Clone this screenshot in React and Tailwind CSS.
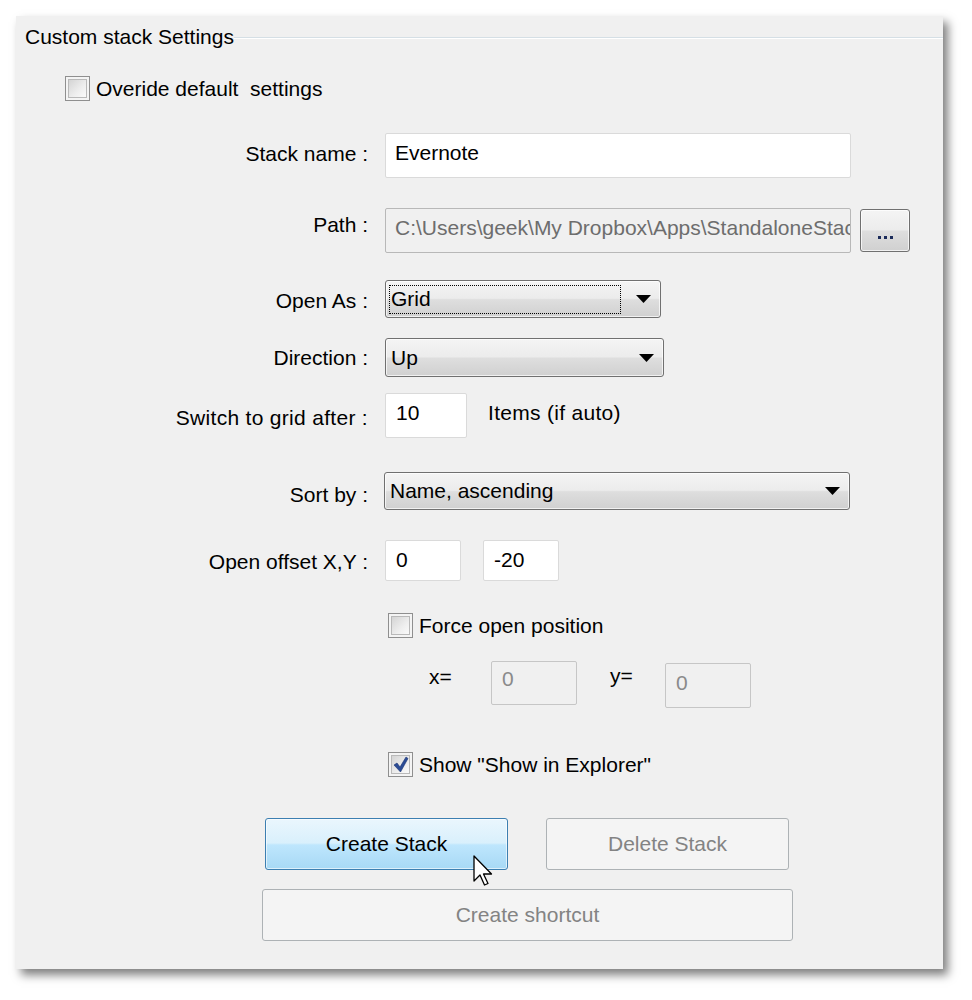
import React from 'react';

const font = { fontFamily: '"Liberation Sans", Arial, sans-serif' };

const Label = ({ children, top }) => (
    <div className={`w-[352px] shrink-0 text-right leading-[24px] ${top}`}>{children}</div>
);

const CheckBox = ({ checked }) => (
    <div className="w-[25px] h-[25px] border border-[#8f8f8f] bg-[#f4f4f4] p-[2px] shrink-0 relative">
        <div className="w-full h-full border border-[#b9b9b9] bg-[linear-gradient(135deg,#d4d4d4_0%,#eeeeee_60%,#fafafa_100%)]" />
        {checked && (
            <svg className="absolute left-[3px] top-[2px]" width="18" height="19" viewBox="0 0 18 19">
                <path d="M2 10 L5 8 L8 12 L14 2 L16 3.5 L8.5 17 Z" fill="#2b4c95" stroke="#1a3373" strokeWidth="0.6" />
            </svg>
        )}
    </div>
);

const Combo = ({ value, width, focus }) => (
    <div className={`${width} h-full rounded-[3px] border border-[#707070] bg-[linear-gradient(to_bottom,#f4f4f4_0%,#ececec_48%,#dedede_52%,#d0d0d0_100%)] shadow-[inset_0_0_0_1px_rgba(255,255,255,0.7)] flex items-center relative`}>
        {focus ? (
            <div className="ml-[3px] h-[29px] w-[232px] border border-dotted border-black flex items-center pl-[1px] leading-[24px]">{value}</div>
        ) : (
            <div className="pl-[5px] leading-[24px]">{value}</div>
        )}
        <svg className="absolute right-[9px] top-1/2 -translate-y-1/2" width="15" height="8" viewBox="0 0 15 8">
            <path d="M0 0 H15 L7.5 8 Z" fill="#000" />
        </svg>
    </div>
);

const TextBox = ({ value, className, disabled }) => (
    <div className={`rounded-[2px] border leading-[24px] whitespace-nowrap overflow-hidden ${disabled ? 'bg-[#f0f0f0] border-[#b8b8b8] text-[#6d6d6d]' : 'bg-white border-[#dadada] text-black'} ${className}`}>
        {value}
    </div>
);

export default function App() {
    return (
        <div className="w-[972px] h-[1000px] bg-white pt-[16px] pl-[16px] text-[21px] text-black" style={font}>
            <div className="w-[927px] h-[953px] bg-[#f0f0f0] shadow-[5px_6px_9px_rgba(0,0,0,0.5)] relative flex flex-col">
                {/* Group title */}
                <div className="mt-[9px] h-[24px] flex items-center">
                    <span className="pl-[9px] leading-[24px]">Custom stack Settings</span>
                    <div className="flex-1 ml-[0px] h-[2px] border-t border-[#d5dfe5] border-b border-b-white mt-[1px]" />
                </div>

                {/* Override */}
                <div className="mt-[27px] pl-[49px] flex items-center h-[25px]">
                    <CheckBox />
                    <span className="ml-[6px] leading-[24px] whitespace-pre">Overide default  settings</span>
                </div>

                {/* Stack name */}
                <div className="mt-[32px] flex items-start">
                    <Label top="mt-[9px]">Stack name :</Label>
                    <TextBox value="Evernote" className="ml-[17px] w-[466px] h-[45px] pl-[9px] pt-[7px]" />
                </div>

                {/* Path */}
                <div className="mt-[30px] flex items-start">
                    <Label top="mt-[5px]">Path :</Label>
                    <TextBox disabled value="C:\Users\geek\My Dropbox\Apps\StandaloneStacks\Evernote" className="ml-[17px] w-[466px] h-[45px] pl-[9px] pt-[7px]" />
                    <div className="ml-[9px] mt-[1px] w-[50px] h-[43px] rounded-[3px] border border-[#707070] bg-[linear-gradient(to_bottom,#f4f4f4_0%,#ececec_48%,#dedede_52%,#d0d0d0_100%)] shadow-[inset_0_0_0_1px_rgba(255,255,255,0.7)] flex items-end justify-center pb-[12px] gap-[3px]">
                        <span className="w-[3px] h-[3px] bg-[#1b2b5a]" />
                        <span className="w-[3px] h-[3px] bg-[#1b2b5a]" />
                        <span className="w-[3px] h-[3px] bg-[#1b2b5a]" />
                    </div>
                </div>

                {/* Open As */}
                <div className="mt-[27px] flex items-start h-[38px]">
                    <Label top="mt-[9px]">Open As :</Label>
                    <div className="ml-[17px] h-[38px]">
                        <Combo value="Grid" width="w-[276px]" focus />
                    </div>
                </div>

                {/* Direction */}
                <div className="mt-[20px] flex items-start h-[39px]">
                    <Label top="mt-[8px]">Direction :</Label>
                    <div className="ml-[17px] h-[39px]">
                        <Combo value="Up" width="w-[279px]" />
                    </div>
                </div>

                {/* Switch to grid */}
                <div className="mt-[16px] flex items-start">
                    <Label top="mt-[13px] tracking-[0.3px]">Switch to grid after :</Label>
                    <TextBox value="10" className="ml-[17px] w-[82px] h-[45px] pl-[10px] pt-[7px]" />
                    <span className="ml-[21px] mt-[8px] leading-[24px] tracking-[0.3px]">Items (if auto)</span>
                </div>

                {/* Sort by */}
                <div className="mt-[34px] flex items-start h-[38px]">
                    <Label top="mt-[11px]">Sort by :</Label>
                    <div className="ml-[16px] h-[38px]">
                        <Combo value="Name, ascending" width="w-[466px]" />
                    </div>
                </div>

                {/* Open offset */}
                <div className="mt-[30px] flex items-start">
                    <Label top="mt-[10px]">Open offset X,Y :</Label>
                    <TextBox value="0" className="ml-[17px] w-[76px] h-[41px] pl-[10px] pt-[7px]" />
                    <TextBox value="-20" className="ml-[22px] w-[76px] h-[41px] pl-[10px] pt-[7px]" />
                </div>

                {/* Force open position */}
                <div className="mt-[32px] pl-[372px] flex items-center h-[25px]">
                    <CheckBox />
                    <span className="ml-[6px] leading-[24px]">Force open position</span>
                </div>

                {/* x / y */}
                <div className="mt-[23px] pl-[413px] flex items-start">
                    <span className="w-[62px] mt-[4px] leading-[24px]">x=</span>
                    <TextBox disabled value="0" className="w-[86px] h-[44px] pl-[10px] pt-[5px] !border-[#c6c6c6] !text-[#8a8a8a]" />
                    <span className="ml-[33px] w-[55px] mt-[3px] leading-[24px]">y=</span>
                    <TextBox disabled value="0" className="mt-[2px] w-[86px] h-[45px] pl-[10px] pt-[7px] !border-[#c6c6c6] !text-[#8a8a8a]" />
                </div>

                {/* Show in Explorer */}
                <div className="mt-[44px] pl-[372px] flex items-center h-[25px]">
                    <CheckBox checked />
                    <span className="ml-[6px] leading-[24px]">Show "Show in Explorer"</span>
                </div>

                {/* Buttons */}
                <div className="mt-[41px] pl-[249px] flex">
                    <div className="w-[243px] h-[52px] rounded-[3px] border border-[#3c7fb1] bg-[linear-gradient(to_bottom,#eaf6fd_0%,#d9f0fc_48%,#bee6fd_52%,#a7d9f5_100%)] shadow-[inset_0_0_0_1px_rgba(255,255,255,0.6)] flex items-center justify-center leading-[24px]">
                        Create Stack
                    </div>
                    <div className="ml-[38px] w-[243px] h-[52px] rounded-[3px] border border-[#adb2b5] bg-[#f4f4f4] flex items-center justify-center leading-[24px] text-[#838383]">
                        Delete Stack
                    </div>
                </div>
                <div className="mt-[19px] pl-[246px] flex">
                    <div className="w-[531px] h-[52px] rounded-[3px] border border-[#adb2b5] bg-[#f4f4f4] flex items-center justify-center leading-[24px] text-[#838383]">
                        Create shortcut
                    </div>
                </div>

                {/* Mouse cursor */}
                <svg className="absolute left-[457px] top-[839px]" width="21" height="32" viewBox="0 0 21 32">
                    <path d="M1 1 L1 26 L7 20 L11.5 30 L15 28.5 L10.5 19 L18.5 19 Z" fill="#fff" stroke="#000" strokeWidth="1.3" strokeLinejoin="round" />
                </svg>
            </div>
        </div>
    );
}
